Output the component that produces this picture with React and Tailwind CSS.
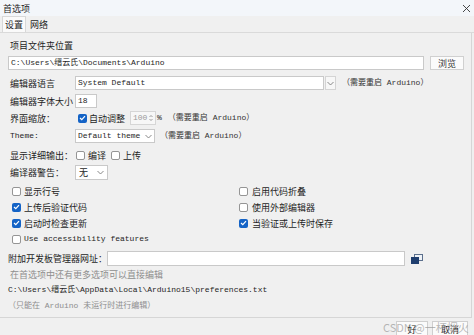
import React from 'react';

const Chevron = () => (
  <svg width="7" height="5" viewBox="0 0 7 5" className="shrink-0">
    <path d="M0.5 1 L3.5 4 L6.5 1" fill="none" stroke="#7a7a7a" strokeWidth="0.9" />
  </svg>
);

function Check({ on }) {
  return on ? (
    <span className="w-[9px] h-[9px] rounded-[2px] bg-[#1463c6] flex items-center justify-center shrink-0">
      <svg width="7" height="6" viewBox="0 0 7 6">
        <path d="M1 3 L2.8 4.7 L6 1.2" fill="none" stroke="#fff" strokeWidth="1.2" />
      </svg>
    </span>
  ) : (
    <span className="block w-[9px] h-[9px] rounded-[2px] bg-white border border-[#959595] shrink-0" />
  );
}

const mono = "font-['Liberation_Mono','Noto_Sans_CJK_SC',monospace] text-[8px]";

export default function App() {
  return (
    <div className="w-[474px] h-[335px] overflow-hidden relative bg-[#f0f0f0] font-['Noto_Sans_CJK_SC',sans-serif] text-[9px] leading-none text-[#1e1e1e]">
      {/* title bar */}
      <div className="h-[16px] bg-[#f3f6fa] flex items-center justify-between pl-[3px] pr-[3px]">
        <span>首选项</span>
        <svg width="9" height="9" viewBox="0 0 9 9">
          <path d="M1 1 L8 8 M8 1 L1 8" stroke="#333" strokeWidth="0.9" />
        </svg>
      </div>

      {/* tabs */}
      <div className="h-[17px] flex items-end pl-[2px] border-b border-[#dadada]">
        <div className="h-[16px] px-[2px] flex items-center bg-[#fafafa] border border-b-0 border-[#d8d8d8]">设置</div>
        <div className="h-[15px] px-[4px] flex items-center">网络</div>
      </div>

      {/* content */}
      <div className="w-[472px] h-[285px] border-r border-b border-[#d6d6d6] flex flex-col pl-[8px]">
        <div className="h-[14px] mt-[5px] pl-[2px] flex items-center">项目文件夹位置</div>

        <div className="h-[14px] mt-[4px] flex items-center gap-[6px]">
          <div className={`w-[416px] h-[14px] bg-white border border-[#c9c9c9] flex items-center pl-[2px] ${mono}`}>
            C:\Users\缙云氏\Documents\Arduino
          </div>
          <div className="w-[34px] h-[14px] bg-[#fbfbfb] border border-[#d0d0d0] flex items-center justify-center text-[#333]">浏览</div>
        </div>

        <div className="h-[14px] mt-[6px] flex items-center">
          <span className="w-[67px] pl-[2px]">编辑器语言</span>
          <div className={`w-[249px] h-[14px] bg-white border border-[#c9c9c9] flex items-center pl-[2px] ${mono}`}>System Default</div>
          <div className="w-[11px] h-[14px] ml-[1px] bg-[#f7f7f7] border border-[#d4d4d4] flex items-center justify-center"><Chevron /></div>
          <span className={`ml-[6px] ${mono} text-[8.5px] text-[#333]`}>（需要重启 Arduino）</span>
        </div>

        <div className="h-[14px] mt-[4px] flex items-center">
          <span className="w-[67px] pl-[2px]">编辑器字体大小</span>
          <div className={`w-[22px] h-[14px] bg-white border border-[#c9c9c9] flex items-center pl-[2px] ${mono}`}>18</div>
        </div>

        <div className="h-[14px] mt-[3px] flex items-center">
          <span className="w-[70px] pl-[2px]">界面缩放：</span>
          <Check on />
          <span className="ml-[2px]">自动调整</span>
          <div className={`ml-[5px] w-[26px] h-[14px] bg-[#f7f7f7] border border-[#d6d6d6] flex items-center justify-between px-[2px] ${mono} text-[#9a9a9a]`}>
            <span>100</span>
            <svg width="4" height="8" viewBox="0 0 4 8">
              <path d="M0.5 3 L2 1.5 L3.5 3 M0.5 5 L2 6.5 L3.5 5" fill="none" stroke="#777" strokeWidth="0.7" />
            </svg>
          </div>
          <span className={`ml-[1px] ${mono}`}>%</span>
          <span className={`ml-[6px] ${mono} text-[8.5px] text-[#333]`}>（需要重启 Arduino）</span>
        </div>

        <div className="h-[14px] mt-[4px] flex items-center">
          <span className={`w-[67px] pl-[2px] ${mono}`}>Theme:</span>
          <div className={`w-[80px] h-[14px] bg-white border border-[#c9c9c9] flex items-center justify-between px-[2px] ${mono}`}>
            <span>Default theme</span>
            <Chevron />
          </div>
          <span className={`ml-[5px] ${mono} text-[8.5px] text-[#333]`}>（需要重启 Arduino）</span>
        </div>

        <div className="h-[14px] mt-[5px] flex items-center">
          <span className="w-[68px] pl-[2px]">显示详细输出：</span>
          <Check />
          <span className="ml-[3px]">编译</span>
          <span className="ml-[5px] flex"><Check /></span>
          <span className="ml-[3px]">上传</span>
        </div>

        <div className="h-[14px] mt-[3px] flex items-center">
          <span className="w-[67px] pl-[2px]">编译器警告：</span>
          <div className="w-[33px] h-[15px] bg-white border border-[#c9c9c9] flex items-center justify-between px-[3px]">
            <span>无</span>
            <Chevron />
          </div>
        </div>

        <div className="mt-[4px] pl-[4px] grid grid-cols-[227px_1fr]">
          <div className="h-[16px] flex items-center gap-[3px]"><Check /><span>显示行号</span></div>
          <div className="h-[16px] flex items-center gap-[4px]"><Check /><span>启用代码折叠</span></div>
          <div className="h-[16px] flex items-center gap-[3px]"><Check on /><span>上传后验证代码</span></div>
          <div className="h-[16px] flex items-center gap-[4px]"><Check /><span>使用外部编辑器</span></div>
          <div className="h-[16px] flex items-center gap-[3px]"><Check on /><span>启动时检查更新</span></div>
          <div className="h-[16px] flex items-center gap-[4px]"><Check on /><span>当验证或上传时保存</span></div>
          <div className="h-[16px] flex items-center gap-[3px]"><Check /><span className={mono}>Use accessibility features</span></div>
        </div>

        <div className="h-[15px] mt-[4px] flex items-center">
          <span className="w-[99px]">附加开发板管理器网址：</span>
          <div className="w-[298px] h-[15px] bg-white border border-[#c9c9c9]" />
          <svg width="12" height="10" viewBox="0 0 12 10" className="ml-[6px]">
            <rect x="3.5" y="0.5" width="8" height="6" fill="#eef2f7" stroke="#5b6f8c" strokeWidth="1" />
            <rect x="0" y="3" width="8" height="7" fill="#1f3e6e" />
          </svg>
        </div>

        <div className="h-[16px] pl-[2px] flex items-center text-[#8e8e8e]">在首选项中还有更多选项可以直接编辑</div>
        <div className={`h-[16px] flex items-center ${mono}`}>C:\Users\缙云氏\AppData\Local\Arduino15\preferences.txt</div>
        <div className={`h-[16px] flex items-center ${mono} text-[#8e8e8e]`}>（只能在 Arduino 未运行时进行编辑）</div>
      </div>

      {/* bottom buttons */}
      <div className="flex justify-end gap-[4px] pr-[6px] pt-[3px]">
        <div className="w-[32px] h-[16px] bg-[#fbfbfb] border border-[#cfcfcf] flex items-center justify-center">好</div>
        <div className="w-[36px] h-[16px] bg-[#fbfbfb] border border-[#cfcfcf] flex items-center justify-center">取消</div>
      </div>

      {/* watermark */}
      <div className="absolute left-[383px] top-[322px] text-[11px] text-[#9a9a9a]/70 font-['Noto_Sans_CJK_SC',sans-serif] whitespace-nowrap">
        CSDN @一杯烟火
      </div>
    </div>
  );
}
